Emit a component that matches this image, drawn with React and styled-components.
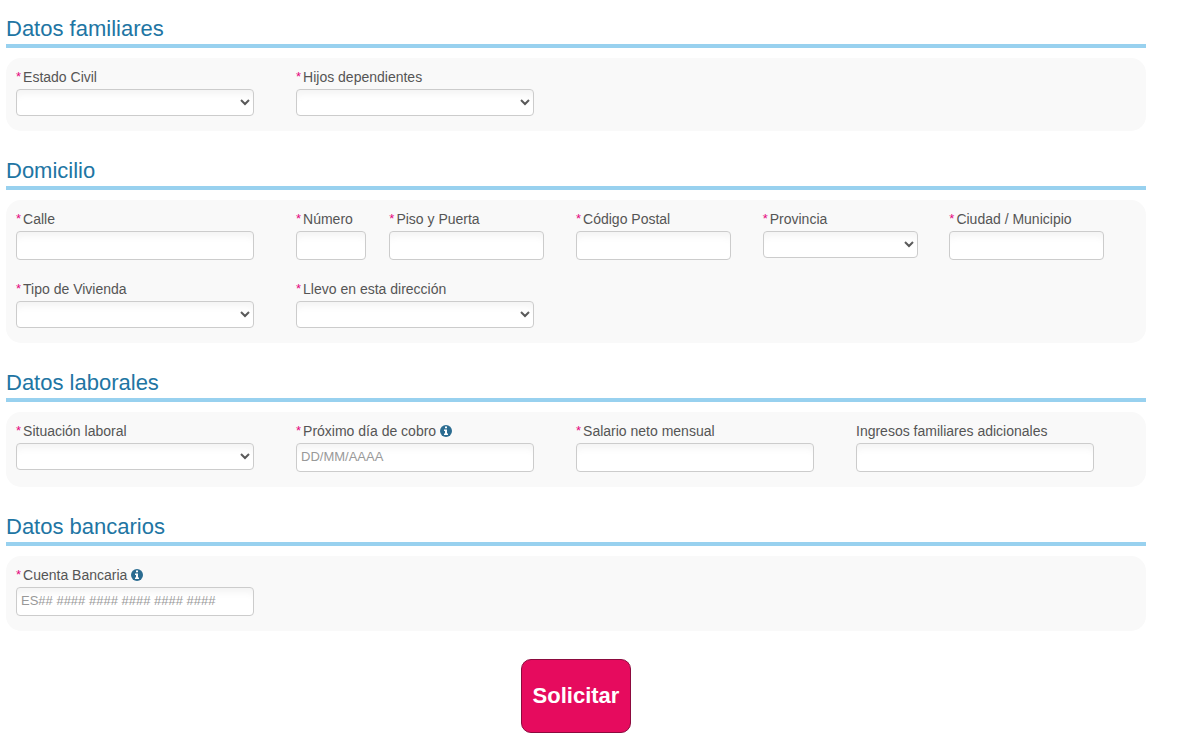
import React from "react";
import styled, { createGlobalStyle, css } from "styled-components";

const sections = [
  {
    title: "Datos familiares",
    rows: [
      [
        { id: "estado-civil", label: "Estado Civil", type: "select", span: 3, required: true },
        { id: "hijos", label: "Hijos dependientes", type: "select", span: 3, required: true },
      ],
    ],
  },
  {
    title: "Domicilio",
    rows: [
      [
        { id: "calle", label: "Calle", span: 3, required: true },
        { id: "numero", label: "Número", span: 1, required: true },
        { id: "piso", label: "Piso y Puerta", span: 2, required: true },
        { id: "codigo-postal", label: "Código Postal", span: 2, required: true },
        { id: "provincia", label: "Provincia", type: "select", span: 2, required: true },
        { id: "ciudad", label: "Ciudad / Municipio", span: 2, required: true },
      ],
      [
        { id: "vivienda", label: "Tipo de Vivienda", type: "select", span: 3, required: true },
        { id: "antiguedad", label: "Llevo en esta dirección", type: "select", span: 3, required: true },
      ],
    ],
  },
  {
    title: "Datos laborales",
    rows: [
      [
        { id: "situacion", label: "Situación laboral", type: "select", span: 3, required: true },
        { id: "cobro", label: "Próximo día de cobro", span: 3, required: true, info: true, placeholder: "DD/MM/AAAA" },
        { id: "salario", label: "Salario neto mensual", span: 3, required: true },
        { id: "ingresos", label: "Ingresos familiares adicionales", span: 3 },
      ],
    ],
  },
  {
    title: "Datos bancarios",
    rows: [
      [
        {
          id: "cuenta",
          label: "Cuenta Bancaria",
          span: 3,
          required: true,
          info: true,
          placeholder: "ES## #### #### #### #### ####",
        },
      ],
    ],
  },
];

const controlWidths = { 1: "75%", 2: "83%", 3: "85%" };

const FormField = ({ field }) => (
  <Field $span={field.span}>
    <Label htmlFor={field.id}>
      {field.required && <Required>*</Required>}
      {field.label}
      {field.info && (
        <InfoIcon viewBox="0 0 12 12" aria-hidden="true">
          <circle cx="6" cy="6" r="6" fill="currentColor" />
          <path d="M5 1.5h2v1.7H5zM4 4.5h3V8.5h1V10H4V8.5h1V6H4z" fill="#fff" />
        </InfoIcon>
      )}
    </Label>
    {field.type === "select" ? (
      <Select id={field.id} name={field.id} $span={field.span} />
    ) : (
      <Input
        id={field.id}
        name={field.id}
        type="text"
        placeholder={field.placeholder}
        $span={field.span}
      />
    )}
  </Field>
);

const App = () => {
  return (
    <>
      <GlobalStyle />
      <Form onSubmit={(e) => e.preventDefault()}>
        {sections.map((section) => (
          <Section key={section.title}>
            <Title>{section.title}</Title>
            <Panel>
              {section.rows.map((row) => (
                <Row key={row[0].id}>
                  {row.map((field) => (
                    <FormField key={field.id} field={field} />
                  ))}
                </Row>
              ))}
            </Panel>
          </Section>
        ))}
        <Actions>
          <SubmitButton type="submit">Solicitar</SubmitButton>
        </Actions>
      </Form>
    </>
  );
};

const GlobalStyle = createGlobalStyle`
* {
  box-sizing: border-box;
}
body {
  margin: 0;
  background: #fff;
  color: #555;
  font-family: "Liberation Sans", Arial, Helvetica, sans-serif;
  font-size: 14px;
}
`;

const Form = styled.form`
padding: 14px 36px 16px 6px;
`;

const Section = styled.section`
margin-bottom: 25px;
`;

const Title = styled.h2`
margin: 0 0 10px;
border-bottom: 4px solid #98d1ef;
color: #2175a3;
font-size: 22px;
font-weight: 400;
line-height: 30px;
`;

const Panel = styled.div`
display: flex;
flex-direction: column;
gap: 20px;
padding: 10px 10px 15px;
border-radius: 15px;
background: #f9f9f9;
`;

const Row = styled.div`
display: grid;
grid-template-columns: repeat(12, minmax(0, 1fr));
align-items: start;
`;

const Field = styled.div`
grid-column: span ${(props) => props.$span};
`;

const Label = styled.label`
display: flex;
align-items: center;
height: 18px;
margin-bottom: 3px;
line-height: 18px;
white-space: nowrap;
`;

const Required = styled.span`
margin-right: 2px;
color: #e5087e;
font-size: 13px;
`;

const InfoIcon = styled.svg`
width: 12px;
height: 12px;
margin-left: 4px;
color: #2b6c91;
`;

const control = css`
display: block;
width: ${(props) => controlWidths[props.$span]};
border: 1px solid #ccc;
border-radius: 4px;
background: #fff;
box-shadow: inset 0 10px 8px -6px #f3f3f3;
color: #555;
font-family: inherit;
font-size: 13px;
`;

const Input = styled.input`
${control}
height: 29px;
padding: 3px 4px 5px;

&::placeholder {
  color: #999;
}
`;

const Select = styled.select`
${control}
height: 27px;
padding-right: 1px;
`;

const Actions = styled.div`
display: flex;
justify-content: center;
padding-top: 3px;
`;

const SubmitButton = styled.button`
height: 74px;
padding: 0 11px;
border: 1px solid #8c0a3e;
border-radius: 10px;
background: #e60b5e;
color: #fff;
font-family: inherit;
font-size: 22px;
font-weight: 700;
cursor: pointer;
`;

export default App;
